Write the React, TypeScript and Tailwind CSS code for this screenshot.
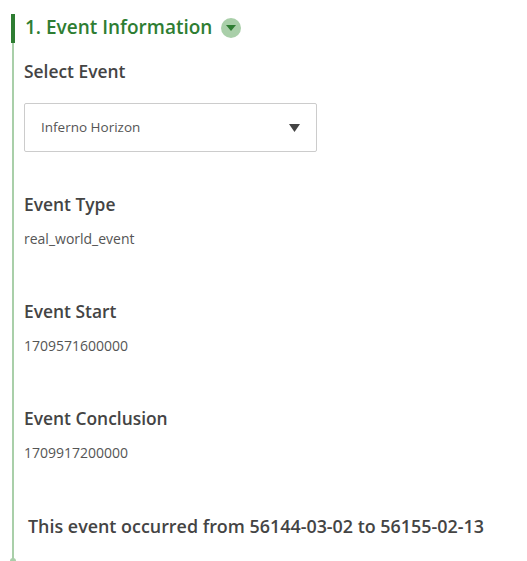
function Field({ label, value }: { label: string; value: string }) {
  return (
    <div className="h-[107px]">
      <p className="text-[17.4px] leading-6 font-semibold text-[#444444]">{label}</p>
      <p className="mt-[13px] text-[14px] leading-5 text-[#555555]">{value}</p>
    </div>
  );
}

export default function App() {
  return (
    <div className="h-[561px] w-[527px] overflow-hidden bg-white pt-[14px] pl-[12px] font-['Open_Sans',sans-serif]">
      <div className="relative h-[547px] border-l-2 border-[#a9cfa9] pl-[10px]">
        {/* section heading, dark tab sits over the rail */}
        <div className="-ml-[13px] flex h-[29px] items-start gap-[9px] border-l-4 border-[#2e7d32] pl-[10px]">
          <h2 className="mt-px text-[19px] leading-6 font-semibold text-[#2e7d32]">1. Event Information</h2>
          <span className="mt-[4px] flex h-5 w-5 items-center justify-center rounded-full bg-[#a9cfa9]">
            <svg width="10" height="6" viewBox="0 0 10 6">
              <path d="M0 0h10L5 6z" fill="#2e7d32" />
            </svg>
          </span>
        </div>

        <p className="mt-[16px] text-[17.4px] leading-6 font-semibold text-[#444444]">Select Event</p>

        <div className="mt-[20px] flex h-[49px] w-[293px] items-center justify-between rounded-[2px] border border-[#cccccc] pr-[16px] pl-4">
          <span className="text-[13.5px] text-[#555555]">Inferno Horizon</span>
          <svg width="11" height="8" viewBox="0 0 11 8">
            <path d="M0 0h11L5.5 8z" fill="#444444" />
          </svg>
        </div>

        <div className="mt-[40px]">
          <Field label="Event Type" value="real_world_event" />
          <Field label="Event Start" value="1709571600000" />
          <Field label="Event Conclusion" value="1709917200000" />
        </div>

        <p className="mt-[1px] pl-1 text-[17.9px] leading-6 font-semibold text-[#444444]">
          This event occurred from 56144-03-02 to 56155-02-13
        </p>

        <span className="absolute -bottom-[3px] -left-[4px] h-[6px] w-[6px] rounded-full bg-[#a9cfa9]" />
      </div>
    </div>
  );
}
